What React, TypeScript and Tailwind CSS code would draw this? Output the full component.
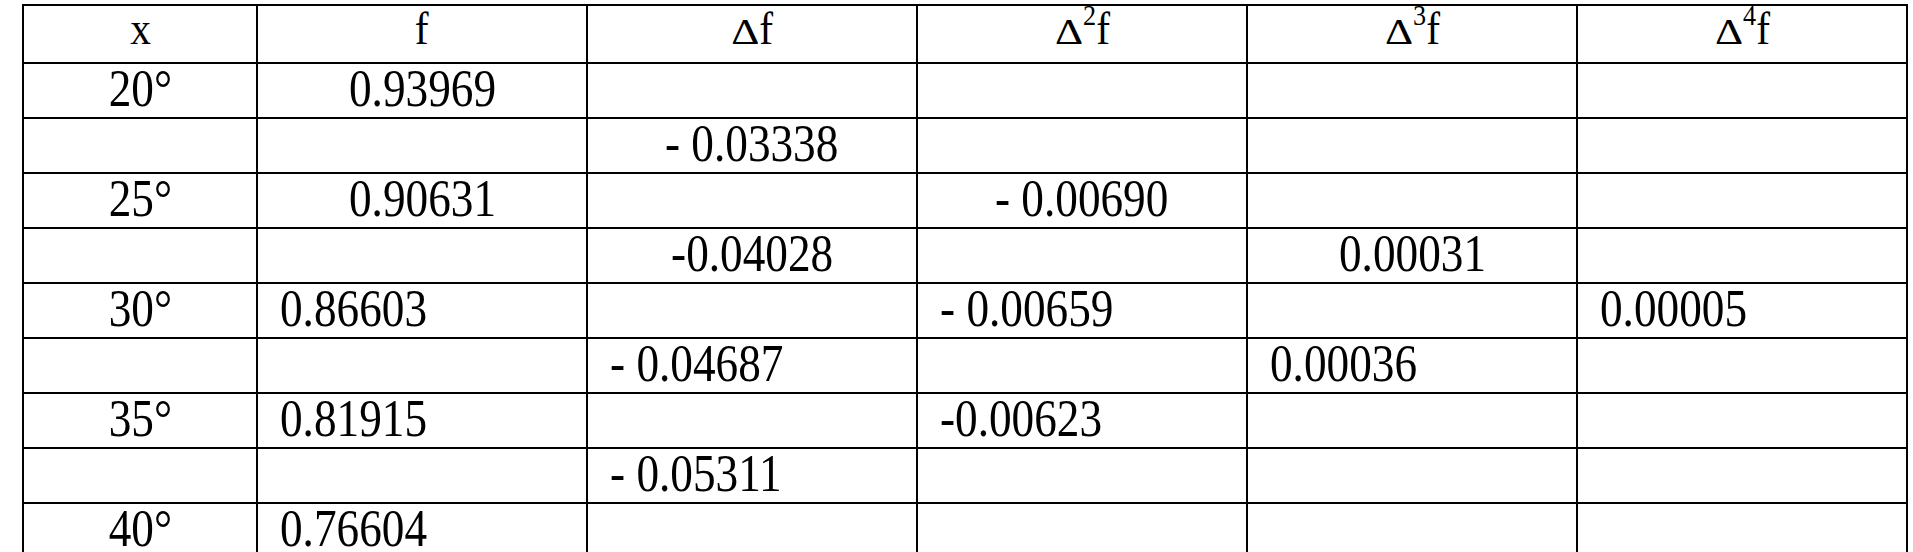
import React from 'react';

type Cell = { text: string; align: 'c' | 'l' } | null;

const c = (text: string): Cell => ({ text, align: 'c' });
const l = (text: string): Cell => ({ text, align: 'l' });
const e: Cell = null;

const rows: Cell[][] = [
  [c('20°'), c('0.93969'), e, e, e, e],
  [e, e, c('- 0.03338'), e, e, e],
  [c('25°'), c('0.90631'), e, c('- 0.00690'), e, e],
  [e, e, c('-0.04028'), e, c('0.00031'), e],
  [c('30°'), l('0.86603'), e, l('- 0.00659'), e, l('0.00005')],
  [e, e, l('- 0.04687'), e, l('0.00036'), e],
  [c('35°'), l('0.81915'), e, l('-0.00623'), e, e],
  [e, e, l('- 0.05311'), e, e, e],
  [c('40°'), l('0.76604'), e, e, e, e],
];

const Delta = ({ power }: { power?: string }) => (
  <span className="inline-flex items-baseline">
    <span className="inline-block text-[36px] scale-x-[1.35] mr-[4px] ml-[4px]">Δ</span>
    {power && <span className="relative -top-[19px] text-[29px]">{power}</span>}
    <span>f</span>
  </span>
);

const headers: React.ReactNode[] = [
  'x',
  'f',
  <Delta key="d1" />,
  <Delta key="d2" power="2" />,
  <Delta key="d3" power="3" />,
  <Delta key="d4" power="4" />,
];

const App = () => {
  return (
    <div className="min-h-screen bg-white pt-[4px] pl-[22px] text-black" style={{ fontFamily: '"Liberation Serif", "Times New Roman", serif' }}>
      <table className="border-collapse table-fixed">
        <colgroup>
          <col className="w-[234px]" />
          <col className="w-[330px]" />
          <col className="w-[330px]" />
          <col className="w-[330px]" />
          <col className="w-[330px]" />
          <col className="w-[330px]" />
        </colgroup>
        <thead>
          <tr className="h-[58px]">
            {headers.map((h, i) => (
              <th key={i} className="border-2 border-black p-0 text-center align-middle font-normal text-[46px] leading-none">
                <span className="inline-block scale-x-90 -translate-y-[5px]">{h}</span>
              </th>
            ))}
          </tr>
        </thead>
        <tbody>
          {rows.map((row, r) => (
            <tr key={r} className="h-[55px]">
              {row.map((cell, i) => (
                <td
                  key={i}
                  className={
                    cell && cell.align === 'l'
                      ? 'border-2 border-black p-0 pl-[22px] text-left align-middle text-[52px] leading-none whitespace-pre'
                      : 'border-2 border-black p-0 text-center align-middle text-[52px] leading-none whitespace-pre'
                  }
                >
                  {cell && (
                    <span
                      className={
                        cell.align === 'l'
                          ? 'inline-block scale-x-[0.87] origin-left -translate-y-[2px]'
                          : 'inline-block scale-x-[0.87] -translate-y-[2px]'
                      }
                    >
                      {cell.text}
                    </span>
                  )}
                </td>
              ))}
            </tr>
          ))}
        </tbody>
      </table>
    </div>
  );
};

export default App;
